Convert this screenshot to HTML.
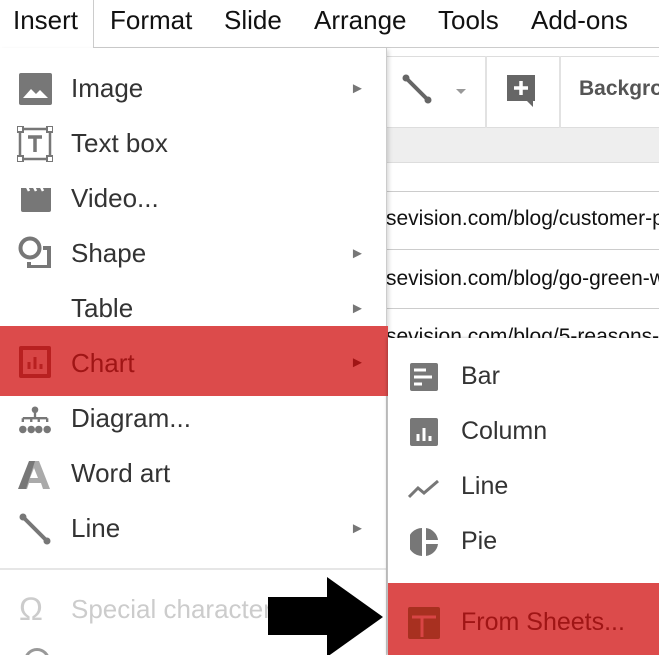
<!DOCTYPE html>
<html><head><style>
*{margin:0;padding:0;box-sizing:border-box}
html,body{width:659px;height:655px;overflow:hidden}
body{background:#fff;font-family:"Liberation Sans",Arial,sans-serif;position:relative;color:#222}
.abs{position:absolute}
.mb{font-size:26px;color:#111;top:5px}
.it{position:absolute;left:0;width:386px;height:55px;font-size:26px;color:#333;line-height:55px}
.it .t{position:absolute;left:71px;top:0}
.it .ic{position:absolute;left:18px;top:12px;width:34px;height:32px}
.arr{position:absolute;left:350px;top:0;font-size:15px;color:#777}
.sub{position:absolute;left:388px;width:271px;height:55px;font-size:25px;color:#333;line-height:55px}
.sub .t{position:absolute;left:73px}
.sub .ic{position:absolute;left:22px;top:14px;width:28px;height:28px}
</style></head><body>
<div class="abs" style="left:386px;top:48px;width:273px;height:8px;background:#fff"></div>
<div class="abs" style="left:386px;top:56px;width:273px;height:72px;background:#fff;border-top:1px solid #ddd;border-bottom:1px solid #ddd"></div>
<svg class="abs" style="left:400px;top:72px" width="34" height="34" viewBox="0 0 34 34"><line x1="6" y1="6" x2="28" y2="28" stroke="#666" stroke-width="4"/><circle cx="6" cy="6" r="3.5" fill="#666"/><circle cx="28" cy="28" r="3.5" fill="#666"/></svg>
<div class="abs" style="left:456px;top:89px;width:0;height:0;border-left:5px solid transparent;border-right:5px solid transparent;border-top:5px solid #999"></div>
<div class="abs" style="left:485px;top:56px;width:2px;height:72px;background:#e2e2e2"></div>
<svg class="abs" style="left:505px;top:74px" width="34" height="34" viewBox="0 0 34 34"><path d="M2 1h28v26h-2v6l-6-6H2z" fill="#666"/><path d="M16 7v14M9 14h14" stroke="#fff" stroke-width="3.5"/></svg>
<div class="abs" style="left:559px;top:56px;width:2px;height:72px;background:#e2e2e2"></div>
<div class="abs" style="left:579px;top:77px;font-size:21px;font-weight:bold;color:#555">Backgro</div>
<div class="abs" style="left:386px;top:128px;width:273px;height:35px;background:#eee;border-bottom:1px solid #ddd"></div>
<div class="abs" style="left:386px;top:191px;width:273px;height:1px;background:#ccc"></div>
<div class="abs" style="left:386px;top:249px;width:273px;height:1px;background:#ccc"></div>
<div class="abs" style="left:386px;top:308px;width:273px;height:1px;background:#ccc"></div>
<div class="abs" style="left:386px;top:207px;font-size:21px;color:#111;width:273px;overflow:hidden;white-space:nowrap">sevision.com/blog/customer-p</div>
<div class="abs" style="left:386px;top:267px;font-size:21px;color:#111;width:273px;overflow:hidden;white-space:nowrap">sevision.com/blog/go-green-w</div>
<div class="abs" style="left:386px;top:325px;font-size:21px;color:#111;width:273px;overflow:hidden;white-space:nowrap">sevision.com/blog/5-reasons-</div>
<div class="abs" style="left:93px;top:0;width:566px;height:48px;border-bottom:1px solid #ccc;background:#fff"></div>
<div class="abs" style="left:0;top:0;width:94px;height:49px;background:#fff;border-right:1px solid #ccc"></div>
<div class="abs mb" style="left:13px">Insert</div>
<div class="abs mb" style="left:110px">Format</div>
<div class="abs mb" style="left:224px">Slide</div>
<div class="abs mb" style="left:314px">Arrange</div>
<div class="abs mb" style="left:438px">Tools</div>
<div class="abs mb" style="left:531px">Add-ons</div>
<div class="abs" style="left:0;top:48px;width:387px;height:607px;background:#fff;border-right:1px solid #ccc;box-shadow:2px 2px 4px rgba(0,0,0,.15)"></div>
<div class="it" style="top:61px"><svg class="ic" viewBox="0 0 34 32"><rect x="1" y="0" width="33" height="32" rx="2" fill="#777"/><path d="M5 25l8-9 5 5 4-4 8 8z" fill="#fff"/></svg><span class="t">Image</span><span class="arr">►</span></div>
<div class="it" style="top:116px"><svg class="ic" viewBox="0 0 36 36" style="left:17px;top:10px;width:36px;height:36px"><rect x="3" y="3" width="30" height="30" fill="none" stroke="#777" stroke-width="2.5"/><rect x="0" y="0" width="6" height="6" fill="#fff" stroke="#777" stroke-width="2"/><rect x="30" y="0" width="6" height="6" fill="#fff" stroke="#777" stroke-width="2"/><rect x="0" y="30" width="6" height="6" fill="#fff" stroke="#777" stroke-width="2"/><rect x="30" y="30" width="6" height="6" fill="#fff" stroke="#777" stroke-width="2"/><path d="M11 11h14M18 11v15" stroke="#777" stroke-width="3.5"/></svg><span class="t">Text box</span></div>
<div class="it" style="top:171px"><svg class="ic" viewBox="0 0 34 32" style="top:13px"><path d="M3 4h30v22a2 2 0 0 1-2 2H5a2 2 0 0 1-2-2z" fill="#777"/><path d="M9 3l2 4M16 3l2 4M23 3l2 4" stroke="#fff" stroke-width="2.5"/></svg><span class="t">Video...</span></div>
<div class="it" style="top:226px"><svg class="ic" viewBox="0 0 34 32" style="top:10px"><circle cx="12" cy="12" r="9.5" fill="none" stroke="#777" stroke-width="4"/><path d="M25 12h6v19H11v-5" fill="none" stroke="#777" stroke-width="4"/></svg><span class="t">Shape</span><span class="arr">►</span></div>
<div class="it" style="top:281px"><span class="t">Table</span><span class="arr">►</span></div>
<div class="it" style="top:326px;height:70px;line-height:74px;background:#dc4b4b;color:#a01515;width:388px"><svg class="ic" viewBox="0 0 34 32" style="top:20px"><rect x="1" y="0" width="32" height="32" rx="2" fill="#b82020"/><rect x="5" y="4" width="24" height="24" fill="#d84545"/><path d="M11 23v-7M17 23v-12M23 23v-5" stroke="#b82020" stroke-width="3"/></svg><span class="t">Chart</span><span class="arr" style="color:#a01515">►</span></div>
<div class="it" style="top:391px"><svg class="ic" viewBox="0 0 34 32" style="top:15px;height:30px"><circle cx="17" cy="4" r="3.5" fill="#777"/><path d="M4 13h26M17 7v6M4 13v4M13 13v4M21 13v4M30 13v4" stroke="#777" stroke-width="2.5"/><circle cx="4" cy="25" r="4" fill="#777"/><circle cx="13" cy="25" r="4" fill="#777"/><circle cx="21" cy="25" r="4" fill="#777"/><circle cx="30" cy="25" r="4" fill="#777"/></svg><span class="t">Diagram...</span></div>
<div class="it" style="top:446px"><svg class="ic" viewBox="0 0 34 32" style="top:13px"><path d="M2 30L13 2h8l11 28h-7l-2-6H11l-2 6z" fill="#aaa"/><path d="M0 30L11 2h6L8 30z" fill="#777"/><path d="M12 19h8l-4-10z" fill="#fff"/></svg><span class="t">Word art</span></div>
<div class="it" style="top:501px"><svg class="ic" viewBox="0 0 34 32" style="top:12px"><line x1="5" y1="4" x2="29" y2="28" stroke="#777" stroke-width="4"/><circle cx="5" cy="4" r="3.5" fill="#777"/><circle cx="29" cy="28" r="3.5" fill="#777"/></svg><span class="t">Line</span><span class="arr">►</span></div>
<div class="abs" style="left:0;top:568px;width:386px;height:2px;background:#e6e6e6"></div>
<div class="it" style="top:582px;color:#ccc"><span class="abs" style="left:19px;top:0;font-size:32px;color:#ccc">Ω</span><span class="t">Special characters</span></div>
<div class="abs" style="left:24px;top:648px;width:26px;height:26px;border:3px solid #999;border-radius:50%"></div>
<div class="abs" style="left:388px;top:338px;width:271px;height:317px;background:#fff;box-shadow:-1px 0 3px rgba(0,0,0,.25)"></div>
<div class="sub" style="top:349px"><svg class="ic" viewBox="0 0 28 28"><rect width="28" height="28" rx="2" fill="#777"/><path d="M4 7h12M4 14h18M4 21h8" stroke="#fff" stroke-width="3"/></svg><span class="t">Bar</span></div>
<div class="sub" style="top:404px"><svg class="ic" viewBox="0 0 28 28"><rect width="28" height="28" rx="2" fill="#777"/><path d="M8 23v-7M14 23v-13M20 23v-5" stroke="#fff" stroke-width="3"/></svg><span class="t">Column</span></div>
<div class="sub" style="top:459px"><svg class="ic" viewBox="0 0 32 28" style="left:20px;width:32px"><path d="M1 24l9-9 6 5 14-12" fill="none" stroke="#777" stroke-width="3"/></svg><span class="t">Line</span></div>
<div class="sub" style="top:514px"><svg class="ic" viewBox="0 0 28 28"><path d="M12 0v28A14 14 0 0 1 12 0z" fill="#777"/><path d="M16 0A14 14 0 0 1 28 12H16z" fill="#777"/><path d="M16 16h12A14 14 0 0 1 16 28z" fill="#777"/></svg><span class="t">Pie</span></div>
<div class="abs" style="left:388px;top:583px;width:271px;height:72px;background:#dc4b4b"></div>
<div class="sub" style="top:595px;color:#a01515"><svg class="ic" viewBox="0 0 32 32" style="left:20px;top:12px;width:32px;height:32px"><rect width="32" height="32" rx="2" fill="#a83020"/><path d="M4 10h24M14 10v20" stroke="#d84545" stroke-width="3"/></svg><span class="t">From Sheets...</span></div>
<svg class="abs" style="left:0;top:0" width="659" height="655"><path d="M268 597H327V577L383 617L327 657V635H268z" fill="#000"/></svg>
</body></html>
